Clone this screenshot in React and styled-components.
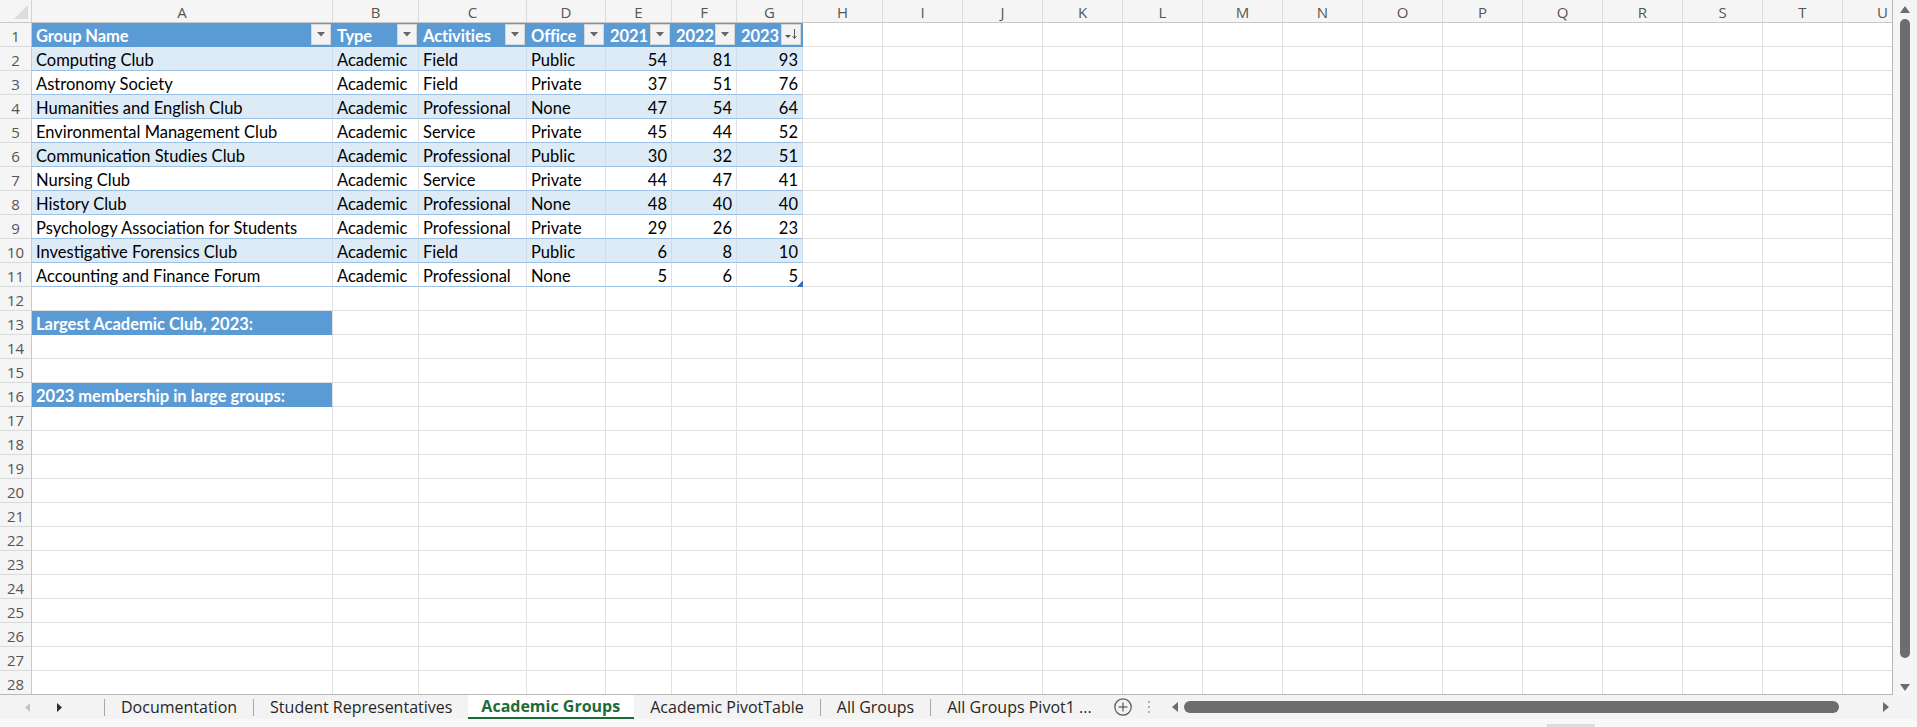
import React from "react";
import styled, { createGlobalStyle, css } from "styled-components";

const GlobalStyle = createGlobalStyle`
  html, body { margin: 0; padding: 0; background: #ffffff; overflow: hidden; }
  * { box-sizing: border-box; }
`;

const COL_TEMPLATE = "32px 301px 86px 108px 79px 66px 65px 66px repeat(14, 80px)";
const LETTERS = "ABCDEFGHIJKLMNOPQRSTU".split("");

const DATA = [
  ["Computing Club", "Academic", "Field", "Public", 54, 81, 93],
  ["Astronomy Society", "Academic", "Field", "Private", 37, 51, 76],
  ["Humanities and English Club", "Academic", "Professional", "None", 47, 54, 64],
  ["Environmental Management Club", "Academic", "Service", "Private", 45, 44, 52],
  ["Communication Studies Club", "Academic", "Professional", "Public", 30, 32, 51],
  ["Nursing Club", "Academic", "Service", "Private", 44, 47, 41],
  ["History Club", "Academic", "Professional", "None", 48, 40, 40],
  ["Psychology Association for Students", "Academic", "Professional", "Private", 29, 26, 23],
  ["Investigative Forensics Club", "Academic", "Field", "Public", 6, 8, 10],
  ["Accounting and Finance Forum", "Academic", "Professional", "None", 5, 6, 5],
];

const HEADERS = ["Group Name", "Type", "Activities", "Office", "2021", "2022", "2023"];
const LABELS = { 13: "Largest Academic Club, 2023:", 16: "2023 membership in large groups:" };

const Window = styled.div`
  width: 1917px;
  height: 727px;
  display: flex;
  flex-direction: column;
  background: #ffffff;
  font-family: Lato, "Open Sans", sans-serif;
`;

const Main = styled.div`
  display: flex;
  height: 695px;
`;

const GridArea = styled.div`
  width: 1893px;
  height: 695px;
  overflow: hidden;
  border-right: 1px solid #b8b8b8;
  border-bottom: 1px solid #b8b8b8;
`;

const Row = styled.div`
  display: grid;
  grid-template-columns: ${COL_TEMPLATE};
  height: ${(p) => (p.$head ? 23 : 24)}px;
  width: 1923px;
`;

const Corner = styled.div`
  position: relative;
  background: #f5f5f5;
  border-right: 1px solid #d4d4d4;
  border-bottom: 1px solid #c8c8c8;
  &::after {
    content: "";
    position: absolute;
    right: 3px;
    bottom: 3px;
    width: 0;
    height: 0;
    border-left: 14px solid transparent;
    border-bottom: 14px solid #dcdcdc;
  }
`;

const ColHead = styled.div`
  background: #f5f5f5;
  border-right: 1px solid #dadada;
  border-bottom: 1px solid #c8c8c8;
  display: flex;
  align-items: center;
  justify-content: center;
  font-family: "Open Sans", "Noto Sans", sans-serif;
  font-size: 15px;
  color: #555555;
  padding-top: 1px;
`;

const RowHead = styled.div`
  background: #f5f5f5;
  border-right: 1px solid #c8c8c8;
  border-bottom: 1px solid #dadada;
  display: flex;
  align-items: center;
  justify-content: center;
  font-family: "Open Sans", "Noto Sans", sans-serif;
  font-size: 15px;
  color: #555555;
  padding-top: 2px;
`;

const tones = {
  plain: css`
    background: #ffffff;
    color: #000000;
    border-right-color: #e1e1e1;
    border-bottom-color: #e1e1e1;
  `,
  white: css`
    background: #ffffff;
    color: #000000;
    border-right-color: #e1e1e1;
    border-bottom-color: #9bc2e6;
  `,
  band: css`
    background: #ddebf7;
    color: #000000;
    border-right-color: #cbdcec;
    border-bottom-color: #9bc2e6;
  `,
  head: css`
    background: #5b9bd5;
    color: #ffffff;
    font-weight: 700;
    border-right-color: #5b9bd5;
    border-bottom-color: #5b9bd5;
  `,
  label: css`
    background: #5b9bd5;
    color: #ffffff;
    font-weight: 700;
    border-right-color: #e1e1e1;
    border-bottom-color: #5b9bd5;
  `,
};

const Cell = styled.div`
  position: relative;
  display: flex;
  align-items: center;
  justify-content: ${(p) => (p.$num ? "flex-end" : "flex-start")};
  padding: 3px ${(p) => (p.$num ? 4 : 3)}px 0 4px;
  border-right: 1px solid;
  border-bottom: 1px solid;
  font-size: 16.5px;
  white-space: nowrap;
  overflow: visible;
  ${(p) => tones[p.$tone || "plain"]}
`;

const HeadCell = styled(Cell)`
  justify-content: space-between;
  padding: 0 1px 0 4px;
  overflow: hidden;
  letter-spacing: -0.1px;
`;

const HeadText = styled.span`
  padding-top: 3px;
`;

const FilterButton = styled.span`
  flex: none;
  width: 20px;
  height: 21px;
  background: #f3f3f3;
  border: 1px solid #d6d6d6;
  display: flex;
  align-items: center;
  justify-content: center;
`;

const Handle = styled.span`
  position: absolute;
  right: -1px;
  bottom: -1px;
  width: 6px;
  height: 6px;
  background: linear-gradient(135deg, transparent 45%, #3a6fc4 46%);
`;

const ScrollV = styled.div`
  width: 24px;
  height: 695px;
  background: #f5f5f5;
  display: flex;
  flex-direction: column;
  align-items: center;
  padding: 6px 0 4px;
`;

const VThumbTrack = styled.div`
  flex: 1;
  display: flex;
  justify-content: center;
  padding: 6px 0 26px;
`;

const VThumb = styled.div`
  width: 10px;
  height: 100%;
  background: #6d6d6d;
  border-radius: 5px;
`;

const TabBar = styled.div`
  height: 24px;
  display: flex;
  align-items: stretch;
  background: #f3f3f3;
  font-family: "Open Sans", "Noto Sans", sans-serif;
  font-size: 16px;
  color: #262626;
`;

const Nav = styled.div`
  width: 104px;
  display: flex;
  align-items: center;
  padding-left: 25px;
  gap: 27px;
`;

const Sep = styled.span`
  width: 1px;
  align-self: center;
  height: 17px;
  background: #a8a8a8;
`;

const Tab = styled.div`
  display: flex;
  align-items: center;
  padding: 0 16px 1px;
  white-space: nowrap;
  ${(p) =>
    p.$active &&
    css`
      background: #ffffff;
      color: #1d6b3b;
      font-weight: 700;
      padding: 0 14px 0 13px;
      border-bottom: 2.5px solid #1d6b3b;
    `}
`;

const IconSlot = styled.div`
  display: flex;
  align-items: center;
  padding: 0 ${(p) => p.$pad || 0}px;
`;

const HScroll = styled.div`
  flex: 1;
  display: flex;
  align-items: center;
  padding-left: 12px;
  padding-right: 28px;
  gap: 6px;
`;

const HThumb = styled.div`
  width: 655px;
  height: 12px;
  border-radius: 6px;
  background: #6d6d6d;
`;

const Spacer = styled.div`
  flex: 1;
`;

const Strip = styled.div`
  height: 8px;
  background: #f8f8f8;
  display: flex;
  padding-left: 1547px;
`;

const Grip = styled.div`
  width: 48px;
  height: 3px;
  margin-top: 5px;
  background: #dedede;
`;

const Tri = ({ dir, color = "#6d6d6d", w = 7, h = 9 }) => {
  const pts =
    dir === "left"
      ? `${w},0 ${w},${h} 0,${h / 2}`
      : dir === "right"
      ? `0,0 0,${h} ${w},${h / 2}`
      : dir === "up"
      ? `0,${h} ${w},${h} ${w / 2},0`
      : `0,0 ${w},0 ${w / 2},${h}`;
  return (
    <svg width={w} height={h} viewBox={`0 0 ${w} ${h}`}>
      <polygon points={pts} fill={color} />
    </svg>
  );
};

const FilterIcon = ({ sorted }) =>
  sorted ? (
    <svg width="16" height="16" viewBox="0 0 16 16">
      <polygon points="2,8 8,8 5,11" fill="#555" />
      <line x1="11.5" y1="2" x2="11.5" y2="11" stroke="#555" strokeWidth="1" />
      <polyline points="9.5,9 11.5,11.5 13.5,9" fill="none" stroke="#555" strokeWidth="1" />
    </svg>
  ) : (
    <svg width="8" height="5" viewBox="0 0 8 5">
      <polygon points="0,0 8,0 4,4.5" fill="#666" />
    </svg>
  );

function dataRow(r) {
  const i = r - 2;
  const d = DATA[i];
  const tone = i % 2 === 0 ? "band" : "white";
  return LETTERS.map((L, c) => {
    if (c < 7) {
      const num = c >= 4;
      return (
        <Cell key={L} $tone={tone} $num={num}>
          {d[c]}
          {r === 11 && c === 6 && <Handle />}
        </Cell>
      );
    }
    return <Cell key={L} />;
  });
}

function gridRow(r) {
  if (r === 1) {
    return LETTERS.map((L, c) =>
      c < 7 ? (
        <HeadCell key={L} $tone="head">
          <HeadText>{HEADERS[c]}</HeadText>
          <FilterButton>
            <FilterIcon sorted={c === 6} />
          </FilterButton>
        </HeadCell>
      ) : (
        <Cell key={L} />
      )
    );
  }
  if (r >= 2 && r <= 11) return dataRow(r);
  return LETTERS.map((L, c) =>
    c === 0 && LABELS[r] ? (
      <Cell key={L} $tone="label">
        {LABELS[r]}
      </Cell>
    ) : (
      <Cell key={L} />
    )
  );
}

const TABS = [
  "Documentation",
  "Student Representatives",
  "Academic Groups",
  "Academic PivotTable",
  "All Groups",
  "All Groups Pivot1 ...",
];

export default function App() {
  const rows = Array.from({ length: 28 }, (_, i) => i + 1);
  return (
    <>
      <GlobalStyle />
      <Window>
        <Main>
          <GridArea>
            <Row $head>
              <Corner />
              {LETTERS.map((L) => (
                <ColHead key={L}>{L}</ColHead>
              ))}
            </Row>
            {rows.map((r) => (
              <Row key={r}>
                <RowHead>{r}</RowHead>
                {gridRow(r)}
              </Row>
            ))}
          </GridArea>
          <ScrollV>
            <Tri dir="up" w={10} h={7} />
            <VThumbTrack>
              <VThumb />
            </VThumbTrack>
            <Tri dir="down" w={10} h={7} />
          </ScrollV>
        </Main>
        <TabBar>
          <Nav>
            <Tri dir="left" color="#c4c4c4" w={5} h={9} />
            <Tri dir="right" color="#2d2d2d" w={5} h={9} />
          </Nav>
          <Sep />
          <Tab>{TABS[0]}</Tab>
          <Sep />
          <Tab>{TABS[1]}</Tab>
          <Tab $active>{TABS[2]}</Tab>
          <Tab>{TABS[3]}</Tab>
          <Sep />
          <Tab>{TABS[4]}</Tab>
          <Sep />
          <Tab>{TABS[5]}</Tab>
          <IconSlot $pad={5}>
            <svg width="20" height="20" viewBox="0 0 20 20">
              <circle cx="10" cy="10" r="8.2" fill="none" stroke="#555" strokeWidth="1.2" />
              <line x1="10" y1="5.5" x2="10" y2="14.5" stroke="#555" strokeWidth="1.2" />
              <line x1="5.5" y1="10" x2="14.5" y2="10" stroke="#555" strokeWidth="1.2" />
            </svg>
          </IconSlot>
          <IconSlot $pad={9}>
            <svg width="4" height="14" viewBox="0 0 4 14">
              <circle cx="2" cy="2" r="1" fill="#9a9a9a" />
              <circle cx="2" cy="7" r="1" fill="#9a9a9a" />
              <circle cx="2" cy="12" r="1" fill="#9a9a9a" />
            </svg>
          </IconSlot>
          <HScroll>
            <Tri dir="left" w={6} h={10} />
            <HThumb />
            <Spacer />
            <Tri dir="right" w={6} h={10} />
          </HScroll>
        </TabBar>
        <Strip>
          <Grip />
        </Strip>
      </Window>
    </>
  );
}
